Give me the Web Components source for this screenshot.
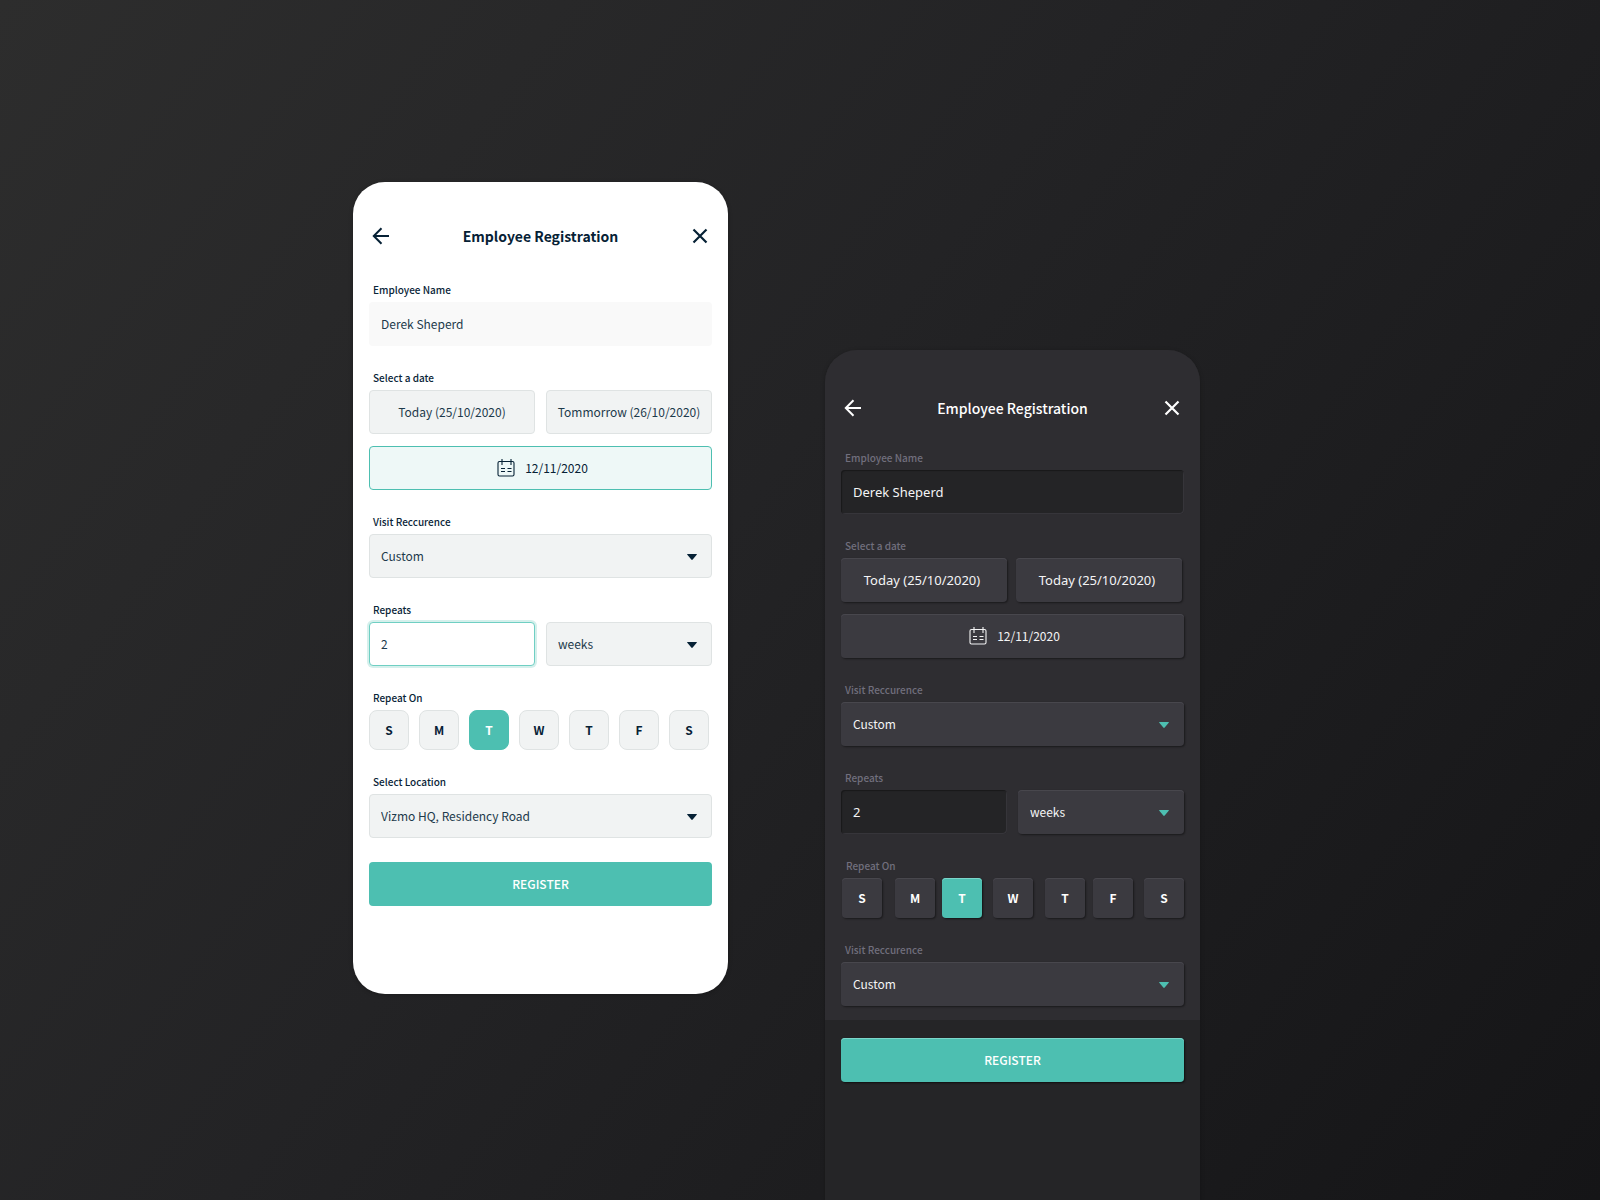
<!DOCTYPE html>
<html lang="en">
<head>
<meta charset="utf-8">
<meta name="viewport" content="width=device-width, initial-scale=1">
<title>Employee Registration</title>
<style>
  body {
    margin: 0;
    font-family: "Noto Sans CJK SC", "Noto Sans", sans-serif;
    background: linear-gradient(127deg, #2d2d2d 0%, #232325 45%, #151517 100%);
  }
</style>
</head>
<body>
<registration-board>
  <phone-screen>
    <screen-header slot="header">Employee Registration</screen-header>
    <text-field value="Derek Sheperd" variant="filled">Employee Name</text-field>
    <field-group>
      <span slot="label">Select a date</span>
      <choice-button>Today (25/10/2020)</choice-button>
      <choice-button>Tommorrow (26/10/2020)</choice-button>
      <choice-button slot="wide" calendar pressed>12/11/2020</choice-button>
    </field-group>
    <select-field value="Custom">Visit Reccurence</select-field>
    <field-row>
      <text-field value="2" variant="focused">Repeats</text-field>
      <select-field value="weeks" unlabelled>Repeat unit</select-field>
    </field-row>
    <day-picker days="S,M,T,W,T,F,S" selected="2">Repeat On</day-picker>
    <select-field value="Vizmo HQ, Residency Road">Select Location</select-field>
    <submit-button slot="footer">REGISTER</submit-button>
  </phone-screen>

  <phone-screen dark>
    <screen-header slot="header">Employee Registration</screen-header>
    <text-field value="Derek Sheperd">Employee Name</text-field>
    <field-group class="dates">
      <span slot="label">Select a date</span>
      <choice-button class="alt">Today (25/10/2020)</choice-button>
      <choice-button class="alt">Today (25/10/2020)</choice-button>
      <choice-button slot="wide" calendar>12/11/2020</choice-button>
    </field-group>
    <select-field value="Custom">Visit Reccurence</select-field>
    <field-row>
      <text-field value="2">Repeats</text-field>
      <select-field value="weeks" unlabelled>Repeat unit</select-field>
    </field-row>
    <day-picker days="S,M,T,W,T,F,S" selected="2" gaps="13,7,11,12,8,11">Repeat On</day-picker>
    <select-field value="Custom">Visit Reccurence</select-field>
    <submit-button slot="footer">REGISTER</submit-button>
  </phone-screen>
</registration-board>

<script>
const define = (name, render) => customElements.define(name, class extends HTMLElement {
  connectedCallback() {
    if (this.shadowRoot) return;
    this.attachShadow({ mode: "open" }).innerHTML = render(this);
  }
});

const base = `
  *, *::before { box-sizing: border-box; }
  button, input, select { font: inherit; color: inherit; margin: 0; outline: 0; }
  .label { display: block; height: 16px; margin-bottom: 4px; padding-left: 4px;
    font-size: 10px; line-height: 16px; font-weight: var(--label-weight); color: var(--label); white-space: nowrap; }
`;

define("registration-board", () => `<style>
  :host { display: flex; justify-content: center; gap: 97px; min-height: 100vh;
    box-sizing: border-box; padding-right: 47px; }
</style><slot></slot>`);

define("phone-screen", () => `<style>
  :host {
    --ink: #062135; --text: #1d3a4b; --label: #0a2538; --label-weight: 500; --title-weight: 700;
    --control: #f1f3f3; --control-border: 1px solid #dfe3e3; --control-shadow: none;
    --input: #ffffff; --input-border: 1px solid #dfe3e3; --input-shadow: none; --pad: 11px; --input-pad: 0 11px 2px;
    --accent: #4dbfb1; --arrow: #062135; --accent-shadow: none; --day-radius: 8px; --day-gap: 10px;
    --input-font: inherit; --input-size: 12px;
    display: block; box-sizing: border-box; width: 375px; align-self: flex-start;
    margin-top: 182px; border-radius: 32px; background: #fff; color: var(--text);
    box-shadow: 0 1px 4px rgba(0,0,0,.25); font-size: 12px; line-height: 20px;
  }
  .top { display: flex; flex-direction: column; padding: 42px 16px 24px; }
  .form { display: flex; flex-direction: column; gap: 24px; margin-top: 34px; }
  .bottom { padding: 0 16px 88px; }
  :host([dark]) {
    --ink: #ffffff; --text: #f4f4f5; --label: #716f7d; --title-weight: 500;
    --control: #3b3a40; --control-border: 0; --pad: 12px; --input-pad: 0 12px;
    --control-shadow: inset 0 1px 0 #48474d, 1px 1px 2px rgba(0,0,0,.45);
    --input: #242426; --input-border: 0;
    --input-shadow: inset 1px 1px 1px #19191a, inset -1px -1px 0 #36353a;
    --arrow: #4dbfb1; --accent-shadow: inset 0 1px 0 #7bd6cb, 1px 1px 2px rgba(0,0,0,.6);
    --day-radius: 4px;
    --input-font: "Noto Sans", sans-serif; --input-size: 13px;
    align-self: stretch; margin-top: 350px; border-radius: 32px 32px 0 0; background: #252527;
  }
  :host([dark]) .top { padding: 46px 16px 14px; background: #2e2d31; border-radius: 32px 32px 0 0; }
  :host([dark]) .form { margin-top: 30px; }
  :host([dark]) .bottom { padding-top: 18px; }
</style>
<div class="top"><slot name="header"></slot><div class="form"><slot></slot></div></div>
<div class="bottom"><slot name="footer"></slot></div>`);

define("screen-header", () => `<style>${base}
  :host { display: flex; align-items: center; justify-content: space-between; height: 24px; color: var(--ink); }
  button { display: flex; padding: 0; border: 0; background: none; }
  h1 { margin: 0; font-size: 14px; line-height: 24px; font-weight: var(--title-weight); white-space: nowrap; }
  svg { display: block; fill: none; stroke: currentColor; stroke-width: 2; }
</style>
<button aria-label="Back"><svg width="24" height="24" viewBox="0 0 24 24"><path d="M20 12H5.500M12.500 4.300L4.800 12l7.700 7.700"/></svg></button>
<h1><slot></slot></h1>
<button aria-label="Close"><svg width="24" height="24" viewBox="0 0 24 24"><path d="M5.500 5.500l13 13M18.500 5.500l-13 13" stroke-width="2.200"/></svg></button>`);

define("text-field", el => `<style>${base}
  :host { display: block; flex: 1 1 0; min-width: 0; }
  input { display: block; width: 100%; height: 44px; padding: var(--input-pad); border: var(--input-border);
    border-radius: 4px; background: var(--input); box-shadow: var(--input-shadow);
    font-family: var(--input-font); font-size: var(--input-size); }
  :host([variant="filled"]) input { background: #f9f9f9; border-color: transparent; }
  :host([variant="focused"]) input { border-color: #6fcfc3; box-shadow: 0 0 0 2px #d5f0ec; }
</style>
<label class="label" for="field"><slot></slot></label>
<input id="field" type="text" value="${el.getAttribute("value")}">`);

define("select-field", el => `<style>${base}
  :host { display: block; flex: 1 1 0; min-width: 0; }
  .box { display: grid; align-items: center; }
  .box > * { grid-area: 1 / 1; }
  select { appearance: none; width: 100%; height: 44px; padding: 0 40px 0 var(--pad); border: var(--control-border);
    border-radius: 4px; background: var(--control); box-shadow: var(--control-shadow); }
  svg { justify-self: end; margin-right: 15px; fill: var(--arrow); pointer-events: none; }
  :host([unlabelled]) .box { margin-top: 20px; }
</style>
${el.hasAttribute("unlabelled") ? "" : `<label class="label" for="field"><slot></slot></label>`}
<div class="box">
  <select id="field" ${el.hasAttribute("unlabelled") ? `aria-label="${el.textContent}"` : ""}><option>${el.getAttribute("value")}</option></select>
  <svg width="10" height="8" viewBox="0 0 10 8"><path d="M.6 2h8.800q.9 0 .3.700L5.700 7.600q-.7.700-1.400 0L.3 2.700Q-.3 2 .6 2z"/></svg>
</div>`);

define("field-row", () => `<style>
  :host { display: flex; gap: 11px; }
</style><slot></slot>`);

define("field-group", () => `<style>${base}
  :host { display: block; }
  .pair { display: flex; gap: 11px; margin-bottom: 12px; }
  :host(.dates) .pair { gap: 9px; padding-right: 2px; }
</style>
<div role="group" aria-labelledby="name">
  <div class="label" id="name"><slot name="label"></slot></div>
  <div class="pair"><slot></slot></div>
  <slot name="wide"></slot>
</div>`);

define("choice-button", el => `<style>${base}
  :host { display: block; flex: 1 1 0; min-width: 0; }
  button { display: flex; align-items: center; justify-content: center; gap: 10px; width: 100%; height: 44px;
    padding: 0; border: var(--control-border); border-radius: 4px; background: var(--control);
    box-shadow: var(--control-shadow); white-space: nowrap; }
  :host([calendar]) button { padding-left: 4px; }
  :host(.alt) button { padding-right: 4px; font-family: var(--input-font); font-size: var(--input-size); }
  :host([pressed]) button { background: #eef8f7; border-color: var(--accent); color: var(--ink); }
  svg { fill: none; stroke: currentColor; }
</style>
<button type="button" aria-pressed="${el.hasAttribute("pressed")}">
  ${el.hasAttribute("calendar") ? `<svg width="18" height="18" viewBox="0 0 18 18"><rect x="1" y="2.500" width="16" height="14.500" rx="1.500" stroke-width="1.100"/><path d="M5 0v6M14 0v6M4 9.500h4M10.500 9.500h4M4 12.500h4M10.500 12.500h4" stroke-width="1.100"/></svg>` : ""}
  <span><slot></slot></span>
</button>`);

define("day-picker", el => {
  const gaps = (el.getAttribute("gaps") || "").split(",");
  const selected = Number(el.getAttribute("selected"));
  return `<style>${base}
  :host { display: block; }
  .days { display: flex; gap: ${el.hasAttribute("gaps") ? "0" : "var(--day-gap)"}; }
  :host([gaps]) { padding-left: 1px; }
  button { flex: none; width: 40px; height: 40px; padding: 0; border: var(--control-border);
    border-radius: var(--day-radius); background: var(--control); box-shadow: var(--control-shadow);
    color: var(--ink); font-weight: 700; text-align: center; }
  button[aria-pressed="true"] { background: var(--accent); border-color: var(--accent);
    box-shadow: var(--accent-shadow); color: #fff; }
</style>
<div role="group" aria-labelledby="name">
  <div class="label" id="name"><slot></slot></div>
  <div class="days">${el.getAttribute("days").split(",").map((d, i) =>
    `<button type="button" aria-pressed="${i === selected}"${gaps[i] ? ` style="margin-right:${gaps[i]}px"` : ""}>${d}</button>`).join("")}</div>
</div>`;
});

define("submit-button", () => `<style>${base}
  :host { display: block; }
  button { display: block; width: 100%; height: 44px; padding: 0; border: 0; border-radius: 4px;
    background: var(--accent); box-shadow: var(--accent-shadow); color: #fff; font-weight: 500; }
</style><button type="submit"><slot></slot></button>`);
</script>
</body>
</html>
